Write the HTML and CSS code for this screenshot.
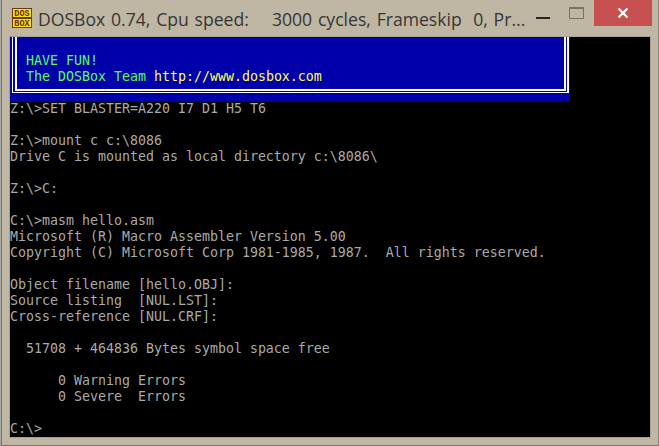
FILE: index.html
```html
<!DOCTYPE html>
<html lang="en">
<head>
<meta charset="utf-8">
<title>DOSBox</title>
<link rel="stylesheet" href="styles.css">
</head>
<body>
<div class="window">
  <header class="titlebar">
    <svg class="app-icon" width="20" height="20" viewBox="0 0 20 20">
      <rect width="20" height="20" fill="#6b3a12"/>
      <rect x="1" y="1" width="18" height="8" fill="#f6e01c"/>
      <rect x="1" y="11" width="18" height="8" fill="#f6e01c"/>
      <text class="icon-text" x="10" y="8" text-anchor="middle">DOS</text>
      <text class="icon-text" x="10" y="18" text-anchor="middle">BOX</text>
    </svg>
    <div class="title">DOSBox 0.74, Cpu speed:    3000 cycles, Frameskip  0, Pr...</div>
    <div class="controls">
      <div class="btn-min"></div>
      <div class="btn-max"></div>
      <div class="btn-close">
        <svg width="12" height="10" viewBox="0 0 12 10"><path d="M1.5 .5l9 9M10.5 .5l-9 9" stroke="#fff" stroke-width="2.2" fill="none"/></svg>
      </div>
    </div>
  </header>
  <main class="screen">
    <section class="banner">
      <div class="frame-outer">
        <div class="frame-inner">
          <div class="fun">HAVE FUN!</div>
          <div class="fun">The DOSBox Team <span class="link">http://www.dosbox.com</span></div>
        </div>
      </div>
    </section>
<pre class="console">Z:\&gt;SET BLASTER=A220 I7 D1 H5 T6

Z:\&gt;mount c c:\8086
Drive C is mounted as local directory c:\8086\

Z:\&gt;C:

C:\&gt;masm hello.asm
Microsoft (R) Macro Assembler Version 5.00
Copyright (C) Microsoft Corp 1981-1985, 1987.  All rights reserved.

Object filename [hello.OBJ]:
Source listing  [NUL.LST]:
Cross-reference [NUL.CRF]:

  51708 + 464836 Bytes symbol space free

      0 Warning Errors
      0 Severe  Errors

C:\&gt;</pre>
  </main>
</div>
</body>
</html>
```
FILE: styles.css
```css
* { box-sizing: border-box; }
html, body { margin: 0; padding: 0; height: 100%; overflow: hidden; background: #a9a9a4; }
.window {
  margin-left: 1px;
  width: 658px;
  height: 446px;
  background: #bfb6a3;
  border-left: 1px solid #77736a;
  border-right: 1px solid #8b8677;
  border-bottom: 1px solid #77736a;
  padding: 0 6px 0 7px;
  display: flex;
  flex-direction: column;
}
.titlebar {
  height: 36px;
  display: flex;
  align-items: flex-start;
  flex: none;
}
.app-icon { margin: 8px 0 0 3px; flex: none; }
.icon-text { font: bold 8.5px "Liberation Mono", monospace; fill: #6b2a08; }
.title {
  flex: 1;
  margin: 6px 0 0 6px;
  font: 17.6px/26px "Open Sans", sans-serif;
  word-spacing: 1.2px;
  white-space: pre;
  color: #363636;
  overflow: hidden;
}
.controls { display: flex; align-items: flex-start; flex: none; }
.btn-min { width: 14px; height: 2px; margin: 17px 19px 0 0; background: #262626; }
.btn-max { width: 15px; height: 12px; margin: 7px 10px 0 0; border: 1px solid #77736a; border-top-width: 2px; }
.btn-close {
  width: 58px;
  height: 26px;
  background: #c75050;
  display: flex;
  align-items: center;
  justify-content: center;
}
.screen {
  width: 642px;
  height: 402px;
  background: #000;
  border: 1px solid #a9a18f;
  overflow: hidden;
  flex: none;
}
.banner {
  width: 560px;
  height: 64px;
  background: #0000aa;
  padding: 0 1px 8px 2px;
}
.frame-outer {
  height: 100%;
  border: solid #fff;
  border-width: 0 2px 1px 1px;
  padding: 0 1px 1px 2px;
}
.frame-inner {
  height: 100%;
  border: solid #fff;
  border-width: 0 2px 2px 2px;
  padding: 16px 0 0 9px;
}
.fun, .console {
  font: 13.29px/16px "DejaVu Sans Mono", monospace;
}
.fun { color: #55ff55; white-space: pre; }
.link { color: #ffff55; }
.console { margin: 0; color: #aaa; }
```
